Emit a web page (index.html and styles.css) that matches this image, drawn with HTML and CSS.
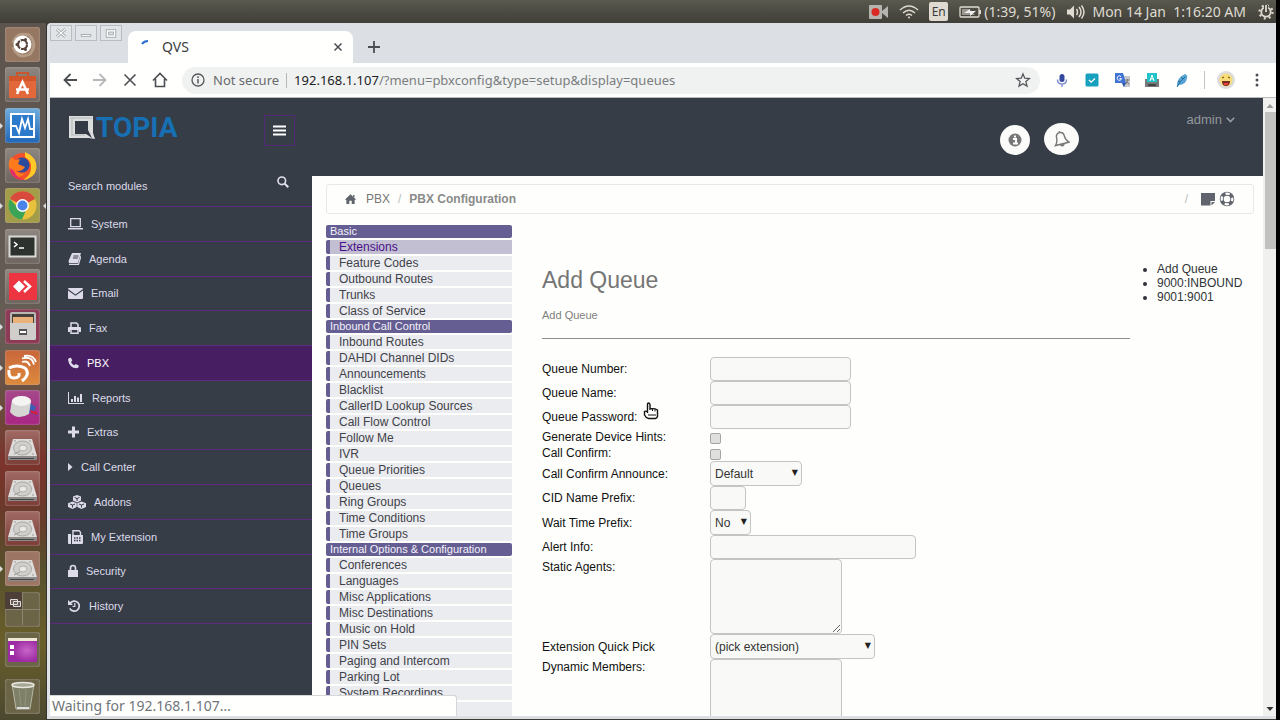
FILE: index.html
```html
<!DOCTYPE html>
<html lang="en">
<head>
<meta charset="utf-8">
<title>QVS</title>
<link rel="stylesheet" href="styles.css">
</head>
<body>
<svg class="defs" aria-hidden="true">
  <symbol id="disk" viewBox="0 0 35 35">
    <path d="M8 9h19l5 17H3z" fill="#dedddb"/><path d="M3 26h29v4H3z" fill="#8b8a88"/><path d="M5 28h24v1H5z" fill="#444"/>
    <ellipse cx="17.500" cy="18" rx="9" ry="7" fill="#d0cfcc" stroke="#aaa9a5"/><ellipse cx="18" cy="18" rx="4" ry="3" fill="#e9e8e5" stroke="#b2b1ad"/>
    <path d="M9 24l6-3M9 11h2M24 11h2M27 24h2" stroke="#999"/>
  </symbol>
</svg>

<header class="panel">
  <svg width="20" height="14" viewBox="0 0 20 14" aria-label="Recording"><rect width="13" height="14" rx="1" fill="#b5b4af"/><path d="M13 6l6-5v12l-6-5z" fill="#b5b4af"/><circle cx="6.500" cy="7" r="4" fill="#d82a22"/></svg>
  <svg class="wifi" width="20" height="14" viewBox="0 0 20 14" fill="none" stroke="#dfdbd2" stroke-width="1.500" aria-label="Wi-Fi"><path d="M1 5q9-8 18 0M4 8q6-5.500 12 0M7 10.500q3-2.500 6 0"/><circle cx="10" cy="12.500" r="1" fill="#dfdbd2" stroke="none"/></svg>
  <span class="lang">En</span>
  <svg class="battery" width="23" height="14" viewBox="0 0 23 14" aria-label="Battery"><rect x="1" y="2" width="19" height="10" rx="1" fill="none" stroke="#dfdbd2" stroke-width="1.300"/><path d="M21 5v4" stroke="#dfdbd2" stroke-width="2"/><path d="M3 4h7l6 6H3z" fill="#98968f"/><path d="M5 8l6-4v2h6l-6 5V8z" fill="#eee"/></svg>
  <span class="remain">(1:39, 51%)</span>
  <svg class="sound" width="20" height="16" viewBox="0 0 20 16" fill="none" stroke="#dfdbd2" stroke-width="1.500" aria-label="Volume"><path d="M1 5.500h3l4-4v13l-4-4H1z" fill="#dfdbd2" stroke="none"/><path d="M10.500 5q2 3 0 6M13 3q4 5 0 10M15.500 1.500q5 6.500 0 13"/></svg>
  <time class="clock">Mon 14 Jan&nbsp; 1:16:20 AM</time>
  <svg width="16" height="16" viewBox="0 0 16 16" fill="none" stroke="#dfdbd2" aria-label="Session"><circle cx="8" cy="8" r="4.700" stroke-width="1.800"/><circle cx="8" cy="8" r="6.500" stroke-width="2.200" stroke-dasharray="2 3.100"/><path d="M8 1v7" stroke="#45443c" stroke-width="4"/><path d="M8 1v7" stroke-width="1.800"/></svg>
</header>

<div class="desktop">
  <nav class="dock" aria-label="Launcher">
    <div class="apps">
      <span class="tile t-dash"><svg viewBox="0 0 35 35"><path d="M8 16Q11 5 24 8Q33 17 25 27Q13 33 8 20" fill="none" stroke="#b39b85" stroke-width="3"/><circle cx="17.500" cy="17.500" r="9" fill="#fff"/><circle cx="17.500" cy="17.500" r="4.500" fill="none" stroke="#554238" stroke-width="2.200" stroke-dasharray="8.400 1"/><circle cx="12" cy="17.500" r="1.500" fill="#554238"/><circle cx="20.500" cy="12.500" r="1.500" fill="#554238"/><circle cx="20.500" cy="22.500" r="1.500" fill="#554238"/></svg></span>
      <span class="tile"><svg viewBox="0 0 35 35"><path d="M12 10V6h11v4" fill="none" stroke="#c9572d" stroke-width="2"/><path d="M4 9h27v22H4z" fill="#e2673a"/><path d="M4 9h27v5H4z" fill="#cf552b"/><path d="M12 27l5.500-12L23 27M11 22.500h13" fill="none" stroke="#fff" stroke-width="2.500"/></svg></span>
      <span class="tile t-blue run"><svg viewBox="0 0 35 35"><rect x="6" y="6" width="23" height="23" fill="#2b7acb" stroke="#fff" stroke-width="2"/><path d="M7 18h4l3 7 3-14 3 9 3-9 2 10h4" fill="none" stroke="#fff" stroke-width="1.800"/></svg></span>
      <span class="tile"><svg viewBox="0 0 35 35"><circle cx="17.500" cy="18.500" r="13.500" fill="#f5502c"/><path d="M20 4q12 5 11.500 16Q30 30 18 32q9-5 8-15-1-5-6-8z" fill="#ffc928"/><circle cx="17" cy="17" r="7.500" fill="#2d4b9c"/><path d="M4 14l2-5 4 3 5-1-2 5 7 3q-4 6-10 3 4 5 11 3-9 8-15-1-3-5-2-10z" fill="#ff7a1c"/><path d="M5 20q1 12 16 12-9-1-12-9z" fill="#e22a6c"/></svg></span>
      <span class="tile t-olive run active"><svg viewBox="0 0 35 35"><circle cx="17.500" cy="17.500" r="14" fill="#e9c23d"/><path d="M17.500 17.500L5 11A14 14 0 0 1 30 11z" fill="#d84a3c"/><path d="M5 11A14 14 0 0 0 17 31.500L22 20l-9 0z" fill="#3aa457"/><circle cx="17.500" cy="17.500" r="6.500" fill="#fff"/><circle cx="17.500" cy="17.500" r="5" fill="#4a83ea"/></svg></span>
      <span class="tile"><svg viewBox="0 0 35 35"><rect x="4.500" y="7.500" width="26" height="20" fill="#2d322f" stroke="#d9d9d5" stroke-width="2"/><path d="M9 13l3 2.500L9 18M14 19h5" fill="none" stroke="#fff" stroke-width="1.500"/></svg></span>
      <span class="tile"><svg viewBox="0 0 35 35"><rect x="4" y="4" width="28" height="27" fill="#ec3540"/><path d="M8 17.500l6-6 6 6-6 6z" fill="#fff"/><path d="M19 12l6 5.500-6 5.500" fill="none" stroke="#fff" stroke-width="2.500"/></svg></span>
      <span class="tile t-wine run"><svg viewBox="0 0 35 35"><rect x="5" y="3" width="26" height="28" rx="2" fill="#b9b8b5"/><path d="M7 5h22v9H7z" fill="#47403a"/><path d="M8 8h20v6H8z" fill="#eab27a"/><path d="M5 14h26v15q0 2-2 2H7q-2 0-2-2z" fill="#cfcecb"/><rect x="14" y="20" width="8" height="6" fill="#555"/><path d="M15 23h6" stroke="#fff" stroke-width="2"/></svg></span>
      <span class="tile t-orange run"><svg viewBox="0 0 35 35" fill="none" stroke="#fff"><path d="M4 18Q12 14 20 18Q26 24 17 31" stroke-width="3"/><path d="M4 20Q3 28 9 28T14 23" stroke-width="3"/><path d="M17 12q6-2 8 4M17 8.500q10-3 12 6M19 6q9-2 12 6" stroke-width="1.800"/></svg></span>
      <span class="tile t-magenta run"><svg viewBox="0 0 35 35"><path d="M23 12l8 5-2 4 4 5-10-4z" fill="#3b5db4"/><path d="M25 20l7 2v3l-6-2z" fill="#d71d40"/><path d="M7 10l-2 12q7 9 19 2l2-13z" fill="#d5d5d3"/><ellipse cx="16.500" cy="11" rx="9.500" ry="5" fill="#f4f4f2"/></svg></span>
      <span class="tile t-red"><svg><use href="#disk"/></svg></span>
      <span class="tile t-red"><svg><use href="#disk"/></svg></span>
      <span class="tile t-red"><svg><use href="#disk"/></svg></span>
      <span class="tile t-tan run"><svg><use href="#disk"/></svg></span>
      <span class="tile t-work"><svg viewBox="0 0 35 35"><path d="M0 0h17v17H0z" fill="#4d3f37"/><path d="M17.500 0v33M0 17.500h35" stroke="#8d8570"/><path d="M5.500 7.500h7v5h-7zM8.500 9.500h7v5h-7z" fill="#6c5c58" stroke="#ddd"/></svg></span>
      <span class="tile t-work"><svg viewBox="0 0 35 35"><defs><radialGradient id="glow" cx=".65" cy=".5"><stop offset="0" stop-color="#c865c9"/><stop offset="1" stop-color="#9c2aa2"/></radialGradient></defs><rect x="3" y="7" width="29" height="23" fill="url(#glow)"/><path d="M3 6h29v3H3z" fill="#eee9d5"/><path d="M5 13h4v4H5zM5 19h4v4H5z" fill="#fff"/></svg></span>
    </div>
    <span class="tile t-work"><svg viewBox="0 0 35 35"><path d="M7 5h22l-4 25H11z" fill="#7f8068" stroke="#b6b6a5"/><ellipse cx="18" cy="6" rx="11" ry="2.500" fill="#a7a794" stroke="#e6e6dd" stroke-width="1.500"/><path d="M12 29h12" stroke="#ddd" stroke-width="2"/><path d="M14 10l2 17M21 10l-1 17" stroke="#94957f"/></svg></span>
  </nav>

  <div class="window">
    <div class="tabstrip">
      <div class="wm">
        <button aria-label="Close window"><svg viewBox="0 0 21 16"><path d="M6 4l9 8M15 4l-9 8" stroke="#a6a9ad" stroke-width="3"/><path d="M6 4l9 8M15 4l-9 8" stroke="#fff" stroke-width="1.200"/></svg></button>
        <button aria-label="Minimise"><svg viewBox="0 0 21 16"><rect x="5.500" y="9.500" width="10" height="2" fill="#fff" stroke="#a6a9ad"/></svg></button>
        <button aria-label="Maximise"><svg viewBox="0 0 21 16"><rect x="5.500" y="4.500" width="10" height="8" fill="#fff" stroke="#a6a9ad"/><rect x="8" y="7" width="5" height="3" fill="#dde0e4" stroke="#a6a9ad"/></svg></button>
      </div>
      <div class="tab">
        <svg width="16" height="16" viewBox="0 0 16 16" aria-hidden="true"><path d="M4 5q2-3 6-3" fill="none" stroke="#2a6fd0" stroke-width="2"/></svg>
        <span class="tab-title">QVS</span>
        <button aria-label="Close tab"><svg viewBox="0 0 10 10"><path d="M1.500 1.500l7 7M8.500 1.500l-7 7" stroke="#4b4e52" stroke-width="1.500"/></svg></button>
      </div>
      <button class="newtab" aria-label="New tab"><svg viewBox="0 0 12 12"><path d="M6 0v12M0 6h12" stroke="#4b4e52" stroke-width="1.800"/></svg></button>
    </div>

    <div class="toolbar">
      <button aria-label="Back"><svg viewBox="0 0 16 16" fill="none" stroke="#4b4e52" stroke-width="1.800"><path d="M15 8H2.500M8.500 2L2.500 8l6 6"/></svg></button>
      <button aria-label="Forward"><svg viewBox="0 0 16 16" fill="none" stroke="#b5b7b9" stroke-width="1.800"><path d="M1 8h12.500M7.500 2l6 6-6 6"/></svg></button>
      <button aria-label="Stop"><svg viewBox="0 0 16 16" fill="none" stroke="#4b4e52" stroke-width="1.600"><path d="M2.500 2.500l11 11M13.500 2.500l-11 11"/></svg></button>
      <button aria-label="Home"><svg viewBox="0 0 16 16" fill="none" stroke="#4b4e52" stroke-width="1.600"><path d="M1 8.500l7-7 7 7M3.500 7v7.500h9V7"/></svg></button>
      <div class="omnibox">
        <svg width="14" height="14" viewBox="0 0 14 14" aria-hidden="true"><circle cx="7" cy="7" r="6" fill="none" stroke="#55585c" stroke-width="1.300"/><path d="M7 6v4.500M7 3.300v1.600" stroke="#55585c" stroke-width="1.500"/></svg>
        <span class="secure">Not secure</span>
        <span class="url"><b>192.168.1.107</b>/?menu=pbxconfig&amp;type=setup&amp;display=queues</span>
        <button aria-label="Bookmark"><svg viewBox="0 0 16 16"><path d="M8 2l1.800 4.200 4.600.4-3.500 3 1.100 4.500L8 11.700l-4 2.400 1.100-4.500-3.500-3 4.600-.4z" fill="none" stroke="#55585c" stroke-width="1.300"/></svg></button>
      </div>
      <button aria-label="Voice"><svg viewBox="0 0 16 16"><rect x="5.500" y="2" width="5" height="8" rx="2.500" fill="#3548a0"/><path d="M3.500 7.500q0 4.500 4.500 4.500t4.500-4.500M8 12v3" fill="none" stroke="#8394cf" stroke-width="1.500"/></svg></button>
      <button aria-label="Tasks"><svg viewBox="0 0 16 16"><rect x="1.500" y="1.500" width="13" height="13" rx="1.500" fill="#18a0bf"/><path d="M5 8l2.200 2.200L11 6.500" fill="none" stroke="#fff" stroke-width="1.300"/></svg></button>
      <button aria-label="Translate"><svg viewBox="0 0 16 16"><path d="M7 4h9v11H9z" fill="#c7cacd"/><path d="M1 1h8l3 10H1z" fill="#4274d4"/><path d="M8 11h4l-2 4z" fill="#2a52aa"/><path d="M7 4.600a2.200 2.200 0 1 0 .5 2H5.600" fill="none" stroke="#fff"/><path d="M11.500 8h4M13.500 7v1l-1.500 4M13 9.500l2 3" stroke="#777" fill="none"/></svg></button>
      <button aria-label="Input tools"><svg viewBox="0 0 16 16"><path d="M1 7h14v8H1z" fill="#777a7c"/><rect x="3" y="1" width="10" height="9" fill="#21c3cd"/><path d="M6 9l2-6 2 6M6.500 7h3" stroke="#fff" fill="none"/><path d="M4 13h8" stroke="#333" stroke-width="1.500"/></svg></button>
      <button aria-label="Feather"><svg viewBox="0 0 16 16"><path d="M3 15q-1-9 8-13 3 1 2 4-1 7-8 7z" fill="#56a3d4"/><path d="M3 15q3-6 8-10M4 9l3 1M7 5l2 2" stroke="#2b6f9f" fill="none"/></svg></button>
      <button class="avatar" aria-label="Profile"><svg viewBox="0 0 18 18"><circle cx="9" cy="9" r="9" fill="#dcdcdc"/><circle cx="9" cy="9" r="6.500" fill="#f8dc78"/><path d="M5 10h8q0 5-4 5t-4-5z" fill="#7c2a20"/><path d="M7 12h4v2H7z" fill="#e84040"/><path d="M5 7l2-1M13 7l-2-1" stroke="#5c4113"/></svg></button>
      <button aria-label="Menu"><svg viewBox="0 0 16 16" fill="#4b4e52"><circle cx="8" cy="3" r="1.500"/><circle cx="8" cy="8" r="1.500"/><circle cx="8" cy="13" r="1.500"/></svg></button>
    </div>

    <div class="viewport">
      <div class="page">
        <header class="top">
          <div class="logo"><svg width="27" height="25" viewBox="0 0 27 25" aria-label="Q"><path d="M0 1h24v17l2 6-6-1H0z" fill="#dcdede"/><path d="M6 6h13v9l4 8-6-4H6z" fill="#343b44"/><path d="M1 3h22M2 20h14M3 4v16" stroke="#b3b6b8"/></svg><span>TOPIA</span></div>
          <button class="burger" aria-label="Toggle menu"><svg viewBox="0 0 13 11"><path d="M0 1.500h13M0 5.500h13M0 9.500h13" stroke="#fff" stroke-width="2"/></svg></button>
          <div class="tools">
            <button class="round" aria-label="Information"><svg width="14" height="14" viewBox="0 0 14 14"><circle cx="7" cy="7" r="6.500" fill="#777"/><path d="M5 6h3v4.500M5 10.500h5M7 2.500v2" stroke="#fff" stroke-width="2" fill="none"/></svg></button>
            <button class="round bell" aria-label="Notifications"><svg width="18" height="18" viewBox="0 0 18 18" fill="none" stroke="#777" stroke-width="1.400"><g transform="rotate(-14 9 9)"><path d="M2 14q3-3 3-7 0-4.500 4-4.500T13 7q0 4 3 7zM9 2.500V1"/><path d="M7 14.500q2 3 4 0" fill="#777"/></g></svg></button>
            <button class="user">admin <svg width="9" height="6" viewBox="0 0 9 6"><path d="M.8.800l3.700 3.700L8.200.8" fill="none" stroke="#9a9da1" stroke-width="1.600"/></svg></button>
          </div>
        </header>
        <div class="body">
          <nav class="side" aria-label="Modules">
            <div class="search">
              <input type="text" placeholder="Search modules" aria-label="Search modules">
              <button aria-label="Search"><svg viewBox="0 0 12 12" fill="none" stroke="#e3e0ec"><circle cx="4.800" cy="4.800" r="3.800" stroke-width="1.600"/><path d="M7.500 7.500l3.800 3.800" stroke-width="2"/></svg></button>
            </div>
            <ul class="modules">
              <li><a href="#"><svg width="15" height="14" viewBox="0 0 15 14"><path d="M2.700 1.700h9.600v8H2.700z" fill="none" stroke="#dddaea" stroke-width="1.300"/><path d="M0 11h15v1.500H0z"/></svg>System</a></li>
              <li><a href="#"><svg width="13" height="14" viewBox="0 0 13 14"><path d="M4 1h9l-3 10H1l-.5-2z"/><path d="M1 12.300h9.500L13 4" fill="none" stroke="#dddaea" stroke-width="1.200"/><path d="M5.500 4h5M4.900 6h5" stroke="#363d47"/></svg>Agenda</a></li>
              <li><a href="#"><svg width="15" height="14" viewBox="0 0 15 14"><path d="M0 3q0-1 1-1h13q1 0 1 1L7.500 8.500zM0 4.500l7.500 5.300L15 4.500V12q0 1-1 1H1q-1 0-1-1z"/></svg>Email</a></li>
              <li><a href="#"><svg width="13" height="14" viewBox="0 0 13 14"><path d="M3 6V2h5.500L10 3.500V6" fill="none" stroke="#dddaea" stroke-width="1.500"/><path d="M0 7q0-1 1-1h11q1 0 1 1v4h-2V9H2v2H0z"/><path d="M3 9v3.300h7V9" fill="none" stroke="#dddaea" stroke-width="1.500"/></svg>Fax</a></li>
              <li class="current"><a href="#"><svg width="11" height="14" viewBox="0 0 11 14"><path d="M0 3.500Q.5 1.500 3 1.800L4.300 4.600 3 6q1 2.300 3.300 3.300l1.500-1.400L10.800 9.500q.2 2.500-2 2.800Q1 12 0 3.500z"/></svg>PBX</a></li>
              <li><a href="#"><svg width="16" height="14" viewBox="0 0 16 14"><path d="M0 1h1v11h15v1H0zM3 8h2v3H3zM6 5h2v6H6zM9 6.500h2V11H9zM12 3h2v8h-2z"/></svg>Reports</a></li>
              <li><a href="#"><svg width="11" height="14" viewBox="0 0 11 14"><path d="M4 1.500h3v4h4v3H7v4H4v-4H0v-3h4z"/></svg>Extras</a></li>
              <li><a href="#"><svg width="5" height="14" viewBox="0 0 5 14"><path d="M0 3l4.500 4L0 11z"/></svg>Call Center</a></li>
              <li><a href="#"><svg width="18" height="14" viewBox="0 0 18 14"><path d="M9 0l4 1.500v4L9 7.500 5 5.500v-4zM4.500 6.500l4.200 1.700v3.900l-4.200 1.900L0 12V8.200zM13.500 6.500L18 8.200V12l-4.500 2-4.200-1.900V8.200z"/><path d="M6.500 2.500L9 3.500l2.500-1M2 9l2.500 1L7 9M11 9l2.500 1L16 9M9 3.500v2.500M4.500 10v2.500M13.500 10v2.500" stroke="#363d47" fill="none"/></svg>Addons</a></li>
              <li><a href="#"><svg width="15" height="14" viewBox="0 0 15 14"><path d="M0 4h3v10H1q-1 0-1-1zM4 5h11v8q0 1-1 1H4z"/><path d="M5 5V.8h6l1.500 1.500V5" fill="none" stroke="#dddaea" stroke-width="1.400"/><path d="M6 8h7M6 10.500h7" stroke="#363d47" stroke-width="1.400" stroke-dasharray="1.500 1"/></svg>My Extension</a></li>
              <li><a href="#"><svg width="10" height="14" viewBox="0 0 10 14"><path d="M0 6h10v7H0z"/><path d="M2.500 6V4q0-2.500 2.500-2.500T7.500 4v2" fill="none" stroke="#dddaea" stroke-width="1.700"/></svg>Security</a></li>
              <li><a href="#"><svg width="13" height="14" viewBox="0 0 13 14"><path d="M2 4.500a5 5 0 1 1-.2 4.800" fill="none" stroke="#dddaea" stroke-width="1.700"/><path d="M0 1v5h5z"/><path d="M6.800 4v3.500H4.500" fill="none" stroke="#dddaea" stroke-width="1.200"/></svg>History</a></li>
            </ul>
          </nav>

          <main class="content">
            <nav class="crumbs" aria-label="Breadcrumb">
              <svg width="11" height="12" viewBox="0 0 12 12" fill="#60656d"><path d="M6 .8L12 6.500l-1.500.5V11.500H7.300V8H4.700v3.500H1.500V7L0 6.500z"/><path d="M8.800 1.500h1.500V5L8.800 3z"/></svg>
              <a href="#">PBX</a><i>/</i><strong>PBX Configuration</strong>
              <i class="last">/</i>
              <svg width="14" height="14" viewBox="0 0 14 14" fill="#60656d"><path d="M0 1h14v8h-4.500v4.500H0z"/><path d="M10.500 10H14l-3.500 3.500z"/></svg>
              <svg class="ring" width="16" height="16" viewBox="0 0 16 16" fill="none"><circle cx="8" cy="8" r="5.300" stroke="#60656d" stroke-width="4"/><circle cx="8" cy="8" r="5.300" stroke="#fff" stroke-width="2.200" stroke-dasharray="4.300 4.020" stroke-dashoffset="2.150"/></svg>
            </nav>
            <div class="columns">
              <nav class="menu" aria-label="PBX">
                <h2>Basic</h2>
                <a class="on" href="#">Extensions</a><a href="#">Feature Codes</a><a href="#">Outbound Routes</a><a href="#">Trunks</a><a href="#">Class of Service</a>
                <h2>Inbound Call Control</h2>
                <a href="#">Inbound Routes</a><a href="#">DAHDI Channel DIDs</a><a href="#">Announcements</a><a href="#">Blacklist</a><a href="#">CallerID Lookup Sources</a><a href="#">Call Flow Control</a><a href="#">Follow Me</a><a href="#">IVR</a><a href="#">Queue Priorities</a><a href="#">Queues</a><a href="#">Ring Groups</a><a href="#">Time Conditions</a><a href="#">Time Groups</a>
                <h2>Internal Options &amp; Configuration</h2>
                <a href="#">Conferences</a><a href="#">Languages</a><a href="#">Misc Applications</a><a href="#">Misc Destinations</a><a href="#">Music on Hold</a><a href="#">PIN Sets</a><a href="#">Paging and Intercom</a><a href="#">Parking Lot</a><a href="#">System Recordings</a><a href="#" aria-label="More"></a>
              </nav>
              <form class="queue">
                <h1>Add Queue</h1>
                <p>Add Queue</p>
                <hr>
                <div class="fields">
                  <label for="num">Queue Number:</label><input id="num" type="text">
                  <label for="name">Queue Name:</label><input id="name" type="text">
                  <label for="pass">Queue Password:</label><input id="pass" type="text">
                  <label for="hints">Generate Device Hints:</label><input id="hints" type="checkbox">
                  <label for="confirm">Call Confirm:</label><input id="confirm" type="checkbox">
                  <label for="announce">Call Confirm Announce:</label><span class="pick w-mid"><select id="announce"><option>Default</option></select></span>
                  <label for="cid">CID Name Prefix:</label><input id="cid" class="w-tiny" type="text">
                  <label for="wait">Wait Time Prefix:</label><span class="pick w-small"><select id="wait"><option>No</option><option>Yes</option></select></span>
                  <label for="alert">Alert Info:</label><input id="alert" class="w-wide" type="text">
                  <label class="tall" for="agents">Static Agents:</label><textarea id="agents"></textarea>
                  <label for="ext">Extension Quick Pick</label><span class="pick w-ext"><select id="ext"><option>(pick extension)</option></select></span>
                  <label class="tall" for="members">Dynamic Members:</label><textarea id="members"></textarea>
                </div>
              </form>
              <ul class="queues"><li>Add Queue</li><li>9000:INBOUND</li><li>9001:9001</li></ul>
            </div>
          </main>
        </div>
      </div>
      <div class="scroll" aria-hidden="true">
        <svg width="13" height="14" viewBox="0 0 13 14"><path d="M3.500 10h7L7 6z" fill="#999"/></svg>
        <span class="thumb"></span>
        <svg class="down" width="13" height="14" viewBox="0 0 13 14"><path d="M3.500 5h7L7 9z" fill="#333"/></svg>
      </div>
      <div class="status">Waiting for 192.168.1.107…</div>
    </div>
  </div>
</div>
<svg class="pointer" width="16" height="18" viewBox="0 0 16 18" aria-hidden="true"><path d="M4.500 10V2.500Q4.500 1 5.500 1T7 2.500V7q4-1 7.500 1v6.500q-.5 1.500-2 2h-7Q3 16 1.500 13V9.500q1-1 3 .5z" fill="#fff" stroke="#111" stroke-width="1.400"/><path d="M4.500 9v2M5 13h8M9.500 7v2M12 7.500v2" stroke="#111"/></svg>
</body>
</html>
```

FILE: styles.css
```css
* { box-sizing: border-box; }
body {
  margin: 0;
  height: 100vh;
  display: flex;
  flex-direction: column;
  overflow: hidden;
  border-right: 4px solid #000;
  background: #3c3b36;
  font: 12px/16px "Liberation Sans", Arial, sans-serif;
  color: #111;
}
button { border: 0; padding: 0; background: none; font: inherit; color: inherit; display: flex; align-items: center; justify-content: center; flex: none; }
a { color: inherit; text-decoration: none; }
ul { list-style: none; margin: 0; padding: 0; }
.defs { position: absolute; width: 0; height: 0; }

/* Desktop panel */
.panel {
  height: 23px;
  flex: none;
  display: flex;
  align-items: center;
  justify-content: flex-end;
  padding-right: 2px;
  background: linear-gradient(#5a594e, #3f3e38);
  color: #dfdbd2;
  font: 14px/20px "Noto Sans", "Open Sans", sans-serif;
}
.wifi { margin-left: 10px; }
.lang { width: 19px; height: 19px; margin: 0 11px 0 10px; border-radius: 2px; background: #dfdbd2; color: #3c3b37; font-size: 12px; line-height: 19px; text-align: center; }
.remain { margin-left: 2px; }
.sound { margin: 0 6px 0 11px; }
.clock { margin-right: 12px; }

.desktop { flex: 1; min-height: 0; display: flex; }

/* Launcher */
.dock {
  width: 47px;
  flex: none;
  display: flex;
  flex-direction: column;
  padding: 4px 6px 6px 5px;
  border-right: 1px solid #35322f;
  background: linear-gradient(#5d544e 0, #665d56 45%, #6b4a3c 56%, #7c332b 63%, #6a3a2a 70%, #57502c 78%, #6a5f2a 89%, #4b4830 100%);
}
.apps { flex: 1; display: flex; flex-direction: column; justify-content: space-between; margin-bottom: 12px; }
.tile { position: relative; width: 35px; height: 35px; border-radius: 3px; background: linear-gradient(#8d8681, #6e6560); box-shadow: inset 0 0 2px #b8b0a8; }
.tile svg { display: block; width: 35px; height: 35px; }
.run::before { content: ""; position: absolute; left: -5px; top: 15px; border: 3px solid transparent; border-left-color: #ddd; border-right: 0; }
.active::after { content: ""; position: absolute; right: -6px; top: 15px; border: 3px solid transparent; border-right-color: #ddd; border-left: 0; }
.t-dash { background: #967761; }
.t-blue { background: linear-gradient(#6faee0, #1e66b8); }
.t-olive { background: #a39c49; }
.t-wine { background: #8c3a55; }
.t-orange { background: linear-gradient(#c8663b, #dd8a3c); }
.t-magenta { background: linear-gradient(#a5488a, #a82583); }
.t-red { background: linear-gradient(#a06a64, #7c3c36); }
.t-tan { background: #9d7564; }
.t-work { background: #6b6446; }

/* Browser window */
.window { flex: 1; min-width: 0; display: flex; flex-direction: column; border-left: 3px solid #dfe3e8; border-bottom: 3px solid #dcdfe2; margin-bottom: 1px; background: #dcdfe3; border-top-left-radius: 4px; }
.tabstrip { height: 40px; flex: none; display: flex; }
.wm { display: flex; gap: 3px; padding: 2px 6px 0 0; }
.wm button { width: 22px; height: 16px; border: 1px solid #b9bcc0; background: #e2e5e8; }
.wm svg { width: 21px; height: 16px; }
.tab { width: 225px; margin-top: 8px; border-radius: 8px 8px 0 0; background: #fffffe; display: flex; align-items: center; padding: 0 10px; color: #3b3e42; font: 14px/20px "Noto Sans", sans-serif; }
.tab-title { flex: 1; margin-left: 8px; }
.tab button { width: 10px; }
.newtab { margin: 8px 0 0 15px; width: 12px; }
.toolbar { height: 35px; flex: none; display: flex; align-items: center; gap: 14px; padding: 0 11px 0 12px; background: #fffffe; border-bottom: 1px solid #b9bcbf; font: 13px/20px "Noto Sans", sans-serif; }
.toolbar button { width: 16px; height: 16px; }
.toolbar svg { flex: none; }
.toolbar > button > svg { width: 16px; height: 16px; }
.omnibox { flex: 1; min-width: 0; height: 27px; border-radius: 14px; background: #f0f2f1; display: flex; align-items: center; padding: 0 9px; white-space: nowrap; }
.secure { margin-left: 8px; padding-right: 7px; border-right: 1px solid #b5b8ba; line-height: 15px; color: #686b6e; }
.url { flex: 1; margin-left: 7px; color: #7b7e80; overflow: hidden; }
.url b { font-weight: 400; color: #202124; }
.toolbar .avatar { width: 31px; height: 18px; padding-left: 12px; border-left: 1px solid #c3c5c7; }
.toolbar .avatar svg { width: 18px; height: 18px; }

/* Page */
.viewport { position: relative; flex: 1; min-height: 0; display: flex; }
.page { flex: 1; min-width: 0; display: flex; flex-direction: column; overflow: hidden; background: #fefffc; }
.top { height: 78px; flex: none; display: flex; align-items: flex-start; padding: 17px 28px 0 19px; background: #363d47; }
.logo { display: flex; align-items: flex-start; width: 195px; color: #176fb4; font: bold 28px/26px Roboto, "Liberation Sans", sans-serif; }
.burger { width: 31px; height: 31px; border: 1px solid #542777; }
.burger svg { width: 13px; height: 11px; }
.tools { margin-left: auto; display: flex; align-items: flex-start; }
.round { width: 30px; height: 30px; margin-top: 10px; border-radius: 50%; background: #fbfbfa; }
.bell { width: 35px; height: 32px; margin: 8px 0 0 14px; }
.user { margin: -4px 0 0 108px; gap: 4px; color: #94979b; font-size: 13px; line-height: 18px; }

.body { flex: 1; min-height: 0; display: flex; }
.side { width: 262px; flex: none; background: #363d47; color: #dddaea; font-size: 11px; }
.search { height: 30px; display: flex; align-items: flex-start; padding: 0 23px 0 18px; }
.search input { flex: 1; min-width: 0; height: 20px; border: 0; padding: 0; background: none; color: inherit; font: inherit; }
.search input::placeholder { color: #dddaea; opacity: 1; }
.search button { width: 12px; height: 12px; }
.modules { height: 418px; display: grid; grid-auto-rows: 1fr; border-top: 1px solid #5c2b80; }
.modules li { border-bottom: 1px solid #5c2b80; }
.modules a { height: 100%; display: flex; align-items: center; gap: 8px; padding-left: 18px; }
.modules svg { fill: #dddaea; flex: none; }
.modules .current { background: #481e62; color: #fff; }

.content { flex: 1; min-width: 0; padding: 8px 0 0 14px; }
.crumbs { height: 30px; margin-right: 9px; display: flex; align-items: center; padding: 0 18px; border: 1px solid #e7e9e6; border-radius: 3px; color: #777; font-size: 12px; }
.crumbs a { margin-left: 10px; }
.crumbs i { margin: 0 8px; color: #bbb; font-style: normal; }
.crumbs strong { color: #8a8a8a; }
.crumbs .last { margin: 0 13px 0 auto; }
.ring { margin-left: 4px; }
.columns { display: flex; align-items: flex-start; margin-top: 11px; }

.menu { width: 186px; flex: none; color: #3f4248; }
.menu h2 { margin: 0 0 2px; height: 13px; padding-left: 4px; border-radius: 2px; background: #645e92; color: #f4f2fa; font-size: 11px; font-weight: 400; line-height: 13px; }
.menu a { display: block; height: 14px; margin-bottom: 2px; padding-left: 9px; border-left: 4px solid #645e92; border-radius: 2px 0 0 2px; background: #ebecf0; line-height: 14px; }
.menu .on { background: #c1bfd1; color: #4a0d87; }

.queue { flex: 1; min-width: 0; margin-left: 30px; padding-top: 40px; }
.queue h1 { margin: 0; color: #757575; font-size: 23px; line-height: 30px; font-weight: 400; }
.queue p { margin: 12px 0 15px; color: #808080; font-size: 11px; line-height: 16px; }
.queue hr { margin: 0 0 18px; border: 0; border-top: 1px solid #8f8f8f; }
.fields { display: grid; grid-template-columns: 168px 1fr; align-items: center; justify-items: start; }
.fields input, .fields select, .fields textarea { margin: 0; border: 1px solid #c4c5c3; border-radius: 4px; background: #f9faf7; color: #333; font: inherit; }
.fields input { width: 141px; height: 24px; }
.fields input[type="checkbox"] { appearance: none; width: 11px; height: 11px; margin: 4px 0 1px; border-color: #a5a6a4; border-radius: 2px; background: #dfe0de; }
.fields .w-tiny { width: 36px; }
.fields .w-wide { width: 206px; }
.pick { position: relative; display: flex; height: 25px; }
.pick::after { content: "▼"; position: absolute; right: 4px; top: 5px; font: 8px/14px "DejaVu Sans", sans-serif; color: #222; pointer-events: none; }
.fields select { appearance: none; width: 100%; height: 25px; padding: 0 4px; }
.fields .w-mid { width: 92px; }
.fields .w-small { width: 41px; }
.fields .w-ext { width: 165px; }
.fields textarea { display: block; width: 132px; height: 75px; }
.fields .tall { align-self: start; }

.queues { width: 133px; flex: none; margin-top: 37px; padding-left: 27px; list-style: disc; color: #2f3338; line-height: 14px; }

.scroll { width: 13px; flex: none; display: flex; flex-direction: column; background: #f0f1ee; }
.thumb { height: 137px; margin-left: 2px; background: #c1c2c0; }
.down { margin-top: auto; }
.status { position: absolute; left: 0; bottom: 0; width: 407px; height: 21px; padding-left: 2px; border: 1px solid #d5d7d6; border-width: 1px 1px 0 0; border-radius: 0 3px 0 0; background: #fffffe; color: #70757a; font: 14px/19px "Noto Sans", sans-serif; }
.pointer { position: absolute; left: 643px; top: 402px; }
```
